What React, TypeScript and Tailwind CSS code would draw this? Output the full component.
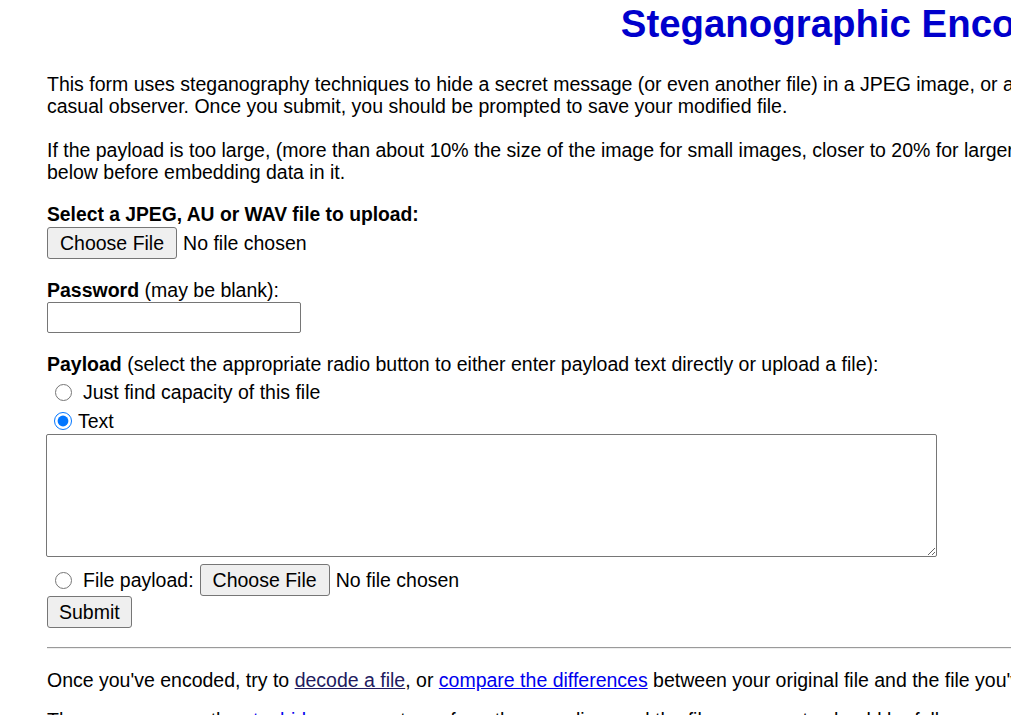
import { useState } from "react";

function FakeFileInput() {
  return (
    <span className="inline-flex items-center">
      <button
        type="button"
        className="h-[32px] rounded-[3px] border border-[#767676] bg-[#efefef] px-[12px] leading-[22px] text-black"
      >
        Choose File
      </button>
      <span className="ml-[6px]">No file chosen</span>
    </span>
  );
}

export default function App() {
  const [mode, setMode] = useState("text");

  return (
    <div
      className="h-screen w-full overflow-hidden bg-white text-[19.5px] leading-[22px] text-black"
      style={{ fontFamily: '"Liberation Sans", Arial, sans-serif' }}
    >
      <div className="ml-[47px] w-[1602px]">
        <h1 className="pt-[2px] text-center text-[38.4px] font-bold leading-[44px] text-[#0000cc]">
          Steganographic Encoder
        </h1>

        <p className="mt-[27px] whitespace-nowrap">
          This form uses steganography techniques to hide a secret message (or even another file) in a JPEG image, or an AU or WAV sound file, so that it is not noticeable to the
          <br />
          casual observer. Once you submit, you should be prompted to save your modified file.
        </p>

        <p className="mt-[22px] whitespace-nowrap">
          If the payload is too large, (more than about 10% the size of the image for small images, closer to 20% for larger images) use the capacity option
          <br />
          below before embedding data in it.
        </p>

        <form className="mt-[21px]" onSubmit={(e) => e.preventDefault()}>
          <div className="text-[19.3px] font-bold">Select a JPEG, AU or WAV file to upload:</div>
          <div className="mt-[1px] flex h-[32px] items-center">
            <FakeFileInput />
          </div>

          <div className="mt-[20px]">
            <b>Password</b> (may be blank):
          </div>
          <input
            type="password"
            className="mt-[1px] block h-[31px] w-[254px] rounded-[2px] border border-[#767676] bg-white px-1"
          />

          <div className="mt-[20px] whitespace-nowrap">
            <b>Payload</b> (select the appropriate radio button to either enter payload text directly or upload a file):
          </div>

          <label className="mt-[4px] flex h-[26px] items-center">
            <input
              type="radio"
              name="payload"
              checked={mode === "capacity"}
              onChange={() => setMode("capacity")}
              className="ml-[8px] h-[17px] w-[17px]"
            />
            <span className="ml-[11px]">Just find capacity of this file</span>
          </label>

          <label className="mt-[3px] flex h-[26px] items-center">
            <input
              type="radio"
              name="payload"
              checked={mode === "text"}
              onChange={() => setMode("text")}
              className="ml-[7px] h-[18px] w-[18px]"
            />
            <span className="ml-[6px]">Text</span>
          </label>

          <textarea className="-ml-[1px] block h-[123px] w-[891px] rounded-[2px] border border-[#767676] bg-white p-1" />

          <div className="mt-[7px] flex h-[32px] items-center">
            <input
              type="radio"
              name="payload"
              checked={mode === "file"}
              onChange={() => setMode("file")}
              className="ml-[8px] h-[17px] w-[17px]"
            />
            <span className="ml-[11px] mr-[6px]">File payload:</span>
            <FakeFileInput />
          </div>

          <button
            type="submit"
            className="block h-[32px] rounded-[3px] border border-[#767676] bg-[#efefef] px-[11px] leading-[22px] text-black"
          >
            Submit
          </button>
        </form>

        <hr className="mt-[19px] h-[2px] border-0 border-t border-b border-t-[#9a9a9a] border-b-[#eeeeee]" />

        <p className="mt-[20px] whitespace-nowrap">
          Once you've encoded, try to{" "}
          <a href="#" className="text-[#221a5e] underline">
            decode a file
          </a>
          , or{" "}
          <a href="#" className="text-[#0000ee] underline">
            compare the differences
          </a>{" "}
          between your original file and the file you've created.
        </p>

        <p className="mt-[18px] whitespace-nowrap">
          The program uses the{" "}
          <a href="#" className="text-[#0000ee] underline">
            steghide
          </a>{" "}
          program to perform the encoding, and the files you create should be fully compatible with it.
        </p>
      </div>
    </div>
  );
}
